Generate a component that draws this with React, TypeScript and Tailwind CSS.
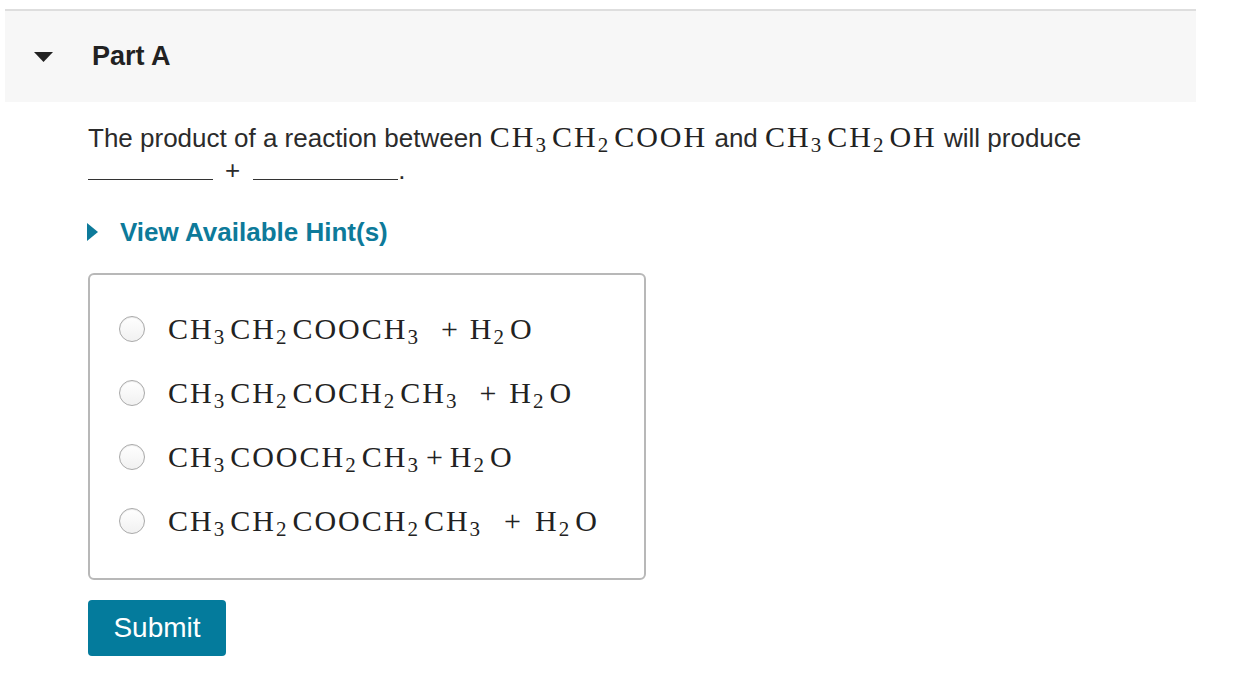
import React from "react";

function F({ s }: { s: string }) {
  const parts = s.split(/(\d)/).filter(Boolean);
  return (
    <span className="font-['Liberation_Serif',serif] text-[30px] leading-none tracking-[2px] text-[#222]">
      {parts.map((p, i) =>
        /\d/.test(p) ? (
          <span key={i} className="relative top-[5px] text-[21px] mr-[4px]">
            {p}
          </span>
        ) : (
          <span key={i}>{p}</span>
        )
      )}
    </span>
  );
}

function Plus({ ml, mr }: { ml: string; mr: string }) {
  return (
    <span className={`font-['Liberation_Serif',serif] text-[30px] leading-none tracking-[2px] text-[#222] ${ml} ${mr}`}>+</span>
  );
}

function Radio() {
  return (
    <span className="inline-block w-[26px] h-[26px] rounded-full border border-[#a9a9a9] bg-gradient-to-b from-[#ffffff] to-[#f1f1f1] shadow-[inset_0_1px_1px_rgba(0,0,0,0.08)] shrink-0" />
  );
}

type Opt = { a: string; ml: string; mr: string };

const options: Opt[] = [
  { a: "CH3CH2COOCH3", ml: "ml-[17px]", mr: "mr-[10px]" },
  { a: "CH3CH2COCH2CH3", ml: "ml-[17px]", mr: "mr-[11px]" },
  { a: "CH3COOCH2CH3", ml: "ml-[2px]", mr: "mr-[5px]" },
  { a: "CH3CH2COOCH2CH3", ml: "ml-[18px]", mr: "mr-[12px]" },
];

export default function App() {
  return (
    <div className="min-h-[678px] bg-white font-['Liberation_Sans',Arial,sans-serif] text-[#2b2b2b]">
      <div className="pt-[9px] pl-[5px] w-[1196px]">
        <div className="border-t-2 border-[#dedede] bg-[#f7f7f7] h-[93px] flex items-center pl-[29px]">
          <svg width="19" height="10" viewBox="0 0 19 10" className="shrink-0">
            <polygon points="0,0 19,0 9.5,10" fill="#222" />
          </svg>
          <span className="ml-[39px] text-[27px] font-bold text-[#222] leading-none">Part A</span>
        </div>

        <div className="pl-[83px]">
          <p className="mt-[20px] text-[26px] leading-[32px] text-[#2b2b2b]">
            The product of a reaction between <F s="CH3CH2COOH" /> and <F s="CH3CH2OH" /> will produce
            <br />
            <span className="inline-block w-[125px] h-0 border-b-[1.5px] border-[#333] relative top-[1px]" />
            <span className="ml-[12px] mr-[13px]">+</span>
            <span className="inline-block w-[145px] h-0 border-b-[1.5px] border-[#333] relative top-[1px]" />
            <span>.</span>
          </p>

          <div className="mt-[30px] h-[32px] flex items-center">
            <svg width="11" height="18" viewBox="0 0 11 18" className="shrink-0 ml-[-1px]">
              <polygon points="0,0 11,9 0,18" fill="#0d7a9a" />
            </svg>
            <span className="ml-[22px] text-[26px] font-bold text-[#0d7a9a] leading-[32px]">View Available Hint(s)</span>
          </div>

          <div className="mt-[25px] w-[558px] border-2 border-[#b8b8b8] rounded-[6px] pt-[22px] pb-[25px] pl-[29px]">
            {options.map((o, i) => (
              <div key={i} className="h-[64px] flex items-center">
                <Radio />
                <span className="ml-[23px] whitespace-nowrap flex items-center">
                  <F s={o.a} />
                  <Plus ml={o.ml} mr={o.mr} />
                  <F s="H2O" />
                </span>
              </div>
            ))}
          </div>

          <button className="mt-[20px] w-[138px] h-[56px] rounded-[4px] bg-[#047b9c] text-white text-[28px] leading-none flex items-center justify-center">
            Submit
          </button>
        </div>
      </div>
    </div>
  );
}
